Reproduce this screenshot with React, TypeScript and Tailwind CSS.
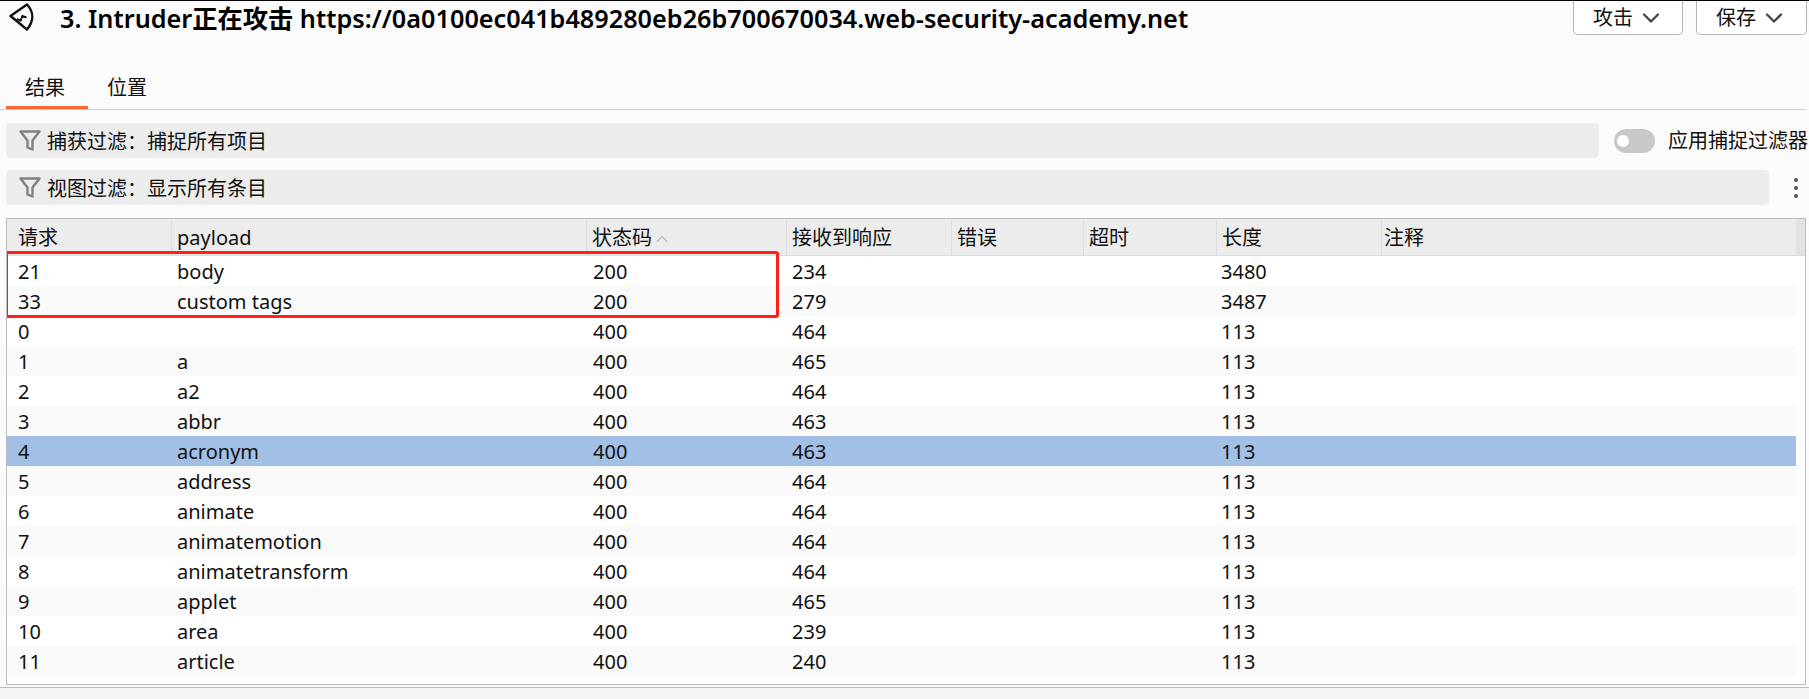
import React from 'react';
import { ChevronDown, ChevronUp } from 'lucide-react';

const FONT = "font-['Noto_Sans','Noto_Sans_CJK_SC',sans-serif]";

const columns = [
  { label: '请求', width: 'w-[165px] pl-[11px]' },
  { label: 'payload', width: 'w-[415px] pl-[5px]' },
  { label: '状态码', width: 'w-[200px] pl-[5px]' },
  { label: '接收到响应', width: 'w-[165px] pl-[5px]' },
  { label: '错误', width: 'w-[132px] pl-[5px]' },
  { label: '超时', width: 'w-[133px] pl-[5px]' },
  { label: '长度', width: 'w-[165px] pl-[5px]' },
  { label: '注释', width: 'w-[414px] pl-[2px]' },
];

const rows: [string, string, string, string, string][] = [
  ['21', 'body', '200', '234', '3480'],
  ['33', 'custom tags', '200', '279', '3487'],
  ['0', '', '400', '464', '113'],
  ['1', 'a', '400', '465', '113'],
  ['2', 'a2', '400', '464', '113'],
  ['3', 'abbr', '400', '463', '113'],
  ['4', 'acronym', '400', '463', '113'],
  ['5', 'address', '400', '464', '113'],
  ['6', 'animate', '400', '464', '113'],
  ['7', 'animatemotion', '400', '464', '113'],
  ['8', 'animatetransform', '400', '464', '113'],
  ['9', 'applet', '400', '465', '113'],
  ['10', 'area', '400', '239', '113'],
  ['11', 'article', '400', '240', '113'],
  ['12', 'aside', '400', '240', '113'],
];

const Logo = () => (
  <svg width="26" height="30" viewBox="0 0 26 30" fill="none" stroke="#111" strokeWidth="2.4" strokeLinejoin="round" strokeLinecap="round">
    <path d="M1.5 13 L18 1.5 C25 9 25 18 18 26.5 Z" />
    <path d="M8.7 16.3 L11.7 17.7 L13.3 13 L16.7 14.3" strokeWidth="2" />
  </svg>
);

const FunnelIcon = () => (
  <svg width="22" height="21" viewBox="0 0 22 21" fill="none" stroke="#808080" strokeWidth="2.4" strokeLinejoin="round" className="shrink-0">
    <path d="M1.5 1.5 H20.5 L13.5 10.5 V19.5 L8.5 17.5 V10.5 Z" />
  </svg>
);

const FilterBar = ({ text, className }: { text: string; className: string }) => (
  <div className={`h-[35px] flex items-center bg-[#ececec] rounded-[4px] border border-[#efefef] pl-[12px] ${className}`}>
    <FunnelIcon />
    <span className="ml-[6px] mt-[2px] text-[20px] text-[#111] whitespace-nowrap">{text}</span>
  </div>
);

const HeaderButton = ({ text, className }: { text: string; className: string }) => (
  <button className={`h-[34px] bg-white border border-t-0 border-[#b5b5b5] rounded-b-[5px] flex items-center pl-[19px] text-[20px] text-[#111] ${className}`}>
    {text}
    <ChevronDown className="w-[28px] h-[28px] ml-[4px] text-[#444]" strokeWidth={2} />
  </button>
);

export default function App() {
  return (
    <div className={`w-[1809px] h-[699px] overflow-hidden bg-[#fbfbfb] border-t border-black flex flex-col ${FONT}`}>
      <div className="h-[108px] relative shrink-0">
        <div className="flex items-start">
          <div className="ml-[9px] mt-[2px] w-[26px]">
            <Logo />
          </div>
          <h1 className="ml-[25px] mt-[2px] text-[25.25px] leading-[30px] font-semibold text-black whitespace-nowrap">
            3. Intruder正在攻击 https://0a0100ec041b489280eb26b700670034.web-security-academy.net
          </h1>
          <div className="ml-auto mr-[2px] flex gap-[13px]">
            <HeaderButton text="攻击" className="w-[110px]" />
            <HeaderButton text="保存" className="w-[111px]" />
          </div>
        </div>
        <div className="absolute left-[6px] bottom-0 h-[38px] flex text-[20px] text-[#111]">
          <div className="w-[82px] h-[38px] pl-[19px] border-b-[3px] border-[#ff6633] leading-[34px]">结果</div>
          <div className="ml-[19px] h-[38px] leading-[34px]">位置</div>
        </div>
      </div>
      <div className="border-t border-[#cfcfcf] w-[1806px] shrink-0" />

      <div className="pt-[13px] pl-[6px] flex items-center">
        <FilterBar text="捕获过滤：捕捉所有项目" className="w-[1593px]" />
        <div className="ml-[15px] w-[41px] h-[24px] rounded-full bg-[#c8c8c8] flex items-center pl-[3px]">
          <div className="w-[12px] h-[12px] rounded-full bg-white" />
        </div>
        <span className="ml-[13px] text-[20px] text-[#111] whitespace-nowrap">应用捕捉过滤器</span>
      </div>

      <div className="pt-[12px] pl-[6px] flex items-center">
        <FilterBar text="视图过滤：显示所有条目" className="w-[1763px]" />
        <div className="ml-[25px] flex flex-col gap-[4px]">
          <div className="w-[4px] h-[4px] rounded-full bg-[#555]" />
          <div className="w-[4px] h-[4px] rounded-full bg-[#555]" />
          <div className="w-[4px] h-[4px] rounded-full bg-[#555]" />
        </div>
      </div>

      <div className="relative mt-[13px] ml-[6px] w-[1800px] h-[467px] border border-[#bdbdbd] overflow-hidden bg-white">
        <div className="flex h-[37px] bg-[#ececec] border-b border-[#dcdcdc]">
          {columns.map((c, i) => (
            <div key={c.label} className={`${c.width} h-full flex items-center pt-[2px] text-[20px] text-[#111] border-r border-[#dddddd] ${i === 7 ? 'border-r-0' : ''}`}>
              {c.label}
              {i === 2 && <ChevronUp className="w-[20px] h-[20px] mt-[2px] text-[#bbbbbb]" strokeWidth={1.6} />}
            </div>
          ))}
          <div className="flex-1 bg-[#e2e2e2]" />
        </div>
        {rows.map((r, i) => (
          <div key={r[0]} className={`flex h-[30px] items-center pt-[2px] w-[1789px] text-[20px] text-[#111] ${i === 6 ? 'bg-[#a2bfe6]' : i % 2 ? 'bg-[#fafafa]' : 'bg-white'}`}>
            <div className="w-[165px] pl-[11px]">{r[0]}</div>
            <div className="w-[415px] pl-[5px]">{r[1]}</div>
            <div className="w-[200px] pl-[6px]">{r[2]}</div>
            <div className="w-[430px] pl-[5px]">{r[3]}</div>
            <div className="pl-[4px]">{r[4]}</div>
          </div>
        ))}
        <div className="absolute left-[-2px] top-[32px] w-[774px] h-[67px] border-[3px] border-[#ff2018] rounded-[3px]" />
      </div>

      <div className="border-t border-[#bdbdbd] mt-[2px] bg-[#f5f5f5] flex-1" />
    </div>
  );
}
